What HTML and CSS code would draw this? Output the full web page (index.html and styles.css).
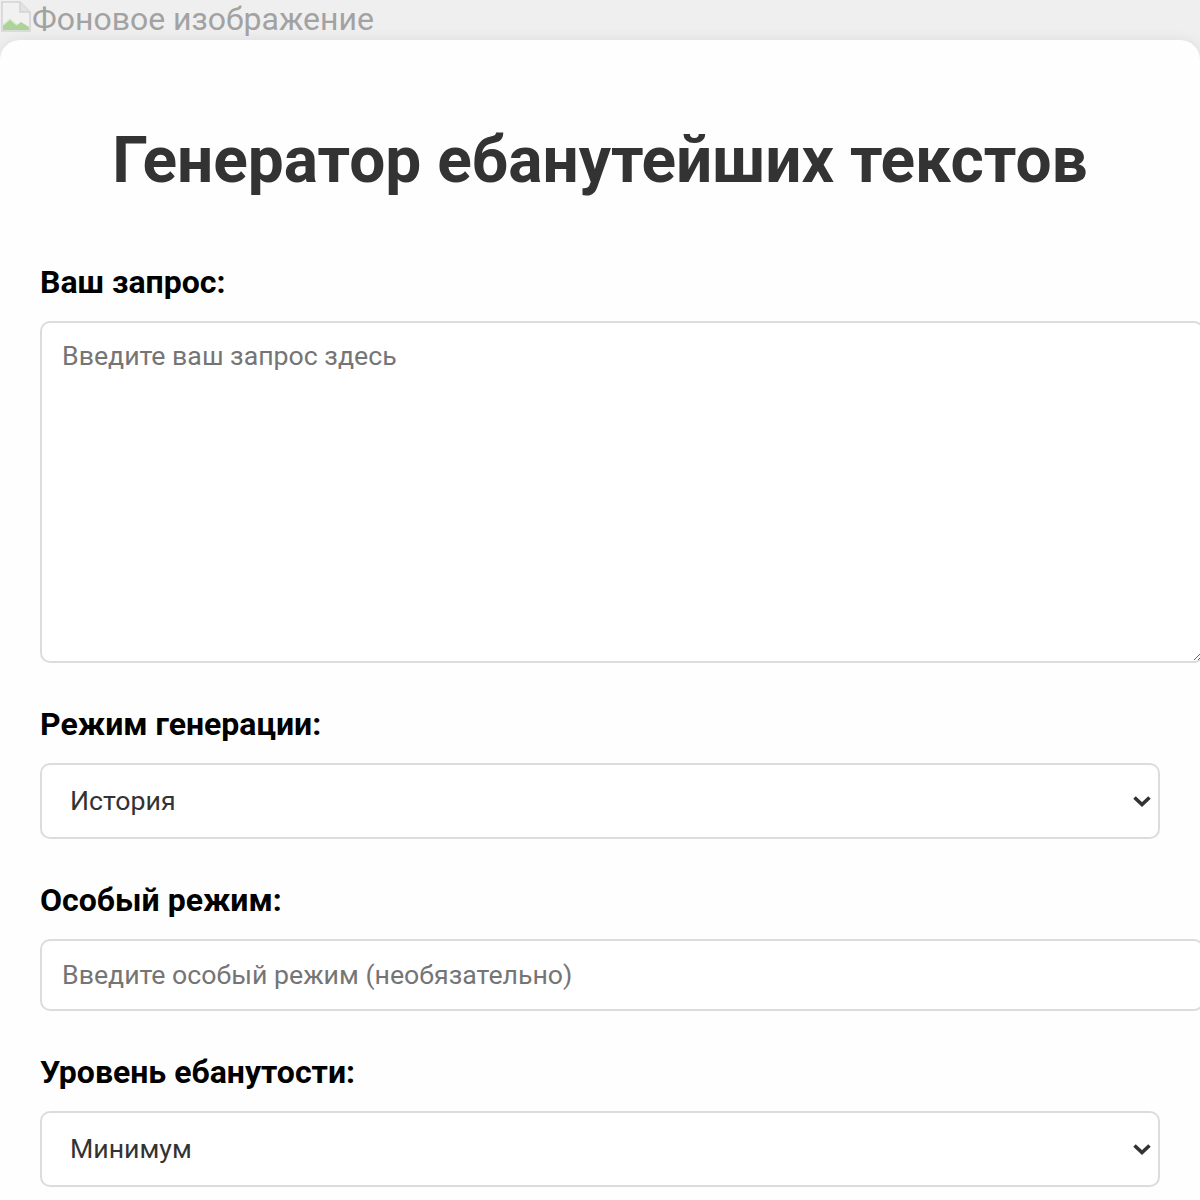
FILE: index.html
```html
<!DOCTYPE html>
<html lang="ru">
<head>
<meta charset="utf-8">
<title>Генератор ебанутейших текстов</title>
<link rel="stylesheet" href="styles.css">
</head>
<body>
<div class="bg">
  <svg class="broken" width="32" height="32" viewBox="0 0 32 32" aria-hidden="true">
    <path d="M2 2 H20 L30 12 V31 H2 Z" fill="#f2f2f2" stroke="#cfcfcf" stroke-width="1.5"/>
    <path d="M20 2 V12 H30" fill="#e2e2e2" stroke="#cfcfcf" stroke-width="1.5"/>
    <path d="M3 30 V25 L10 19 L17 25 L21 22 L29 27 V30 Z" fill="#a3cf8b"/>
    <path d="M3 25 L10 19 L17 25" fill="none" stroke="#d8ecd0" stroke-width="1.4"/>
  </svg>
  <span class="alt">Фоновое изображение</span>
</div>
<main class="card">
  <h1 class="title">Генератор ебанутейших текстов</h1>
  <div class="group">
    <label class="label" for="q">Ваш запрос:</label>
    <textarea id="q" class="field area" placeholder="Введите ваш запрос здесь"></textarea>
  </div>
  <div class="group">
    <label class="label" for="mode">Режим генерации:</label>
    <div class="select-wrap">
      <select id="mode" class="select">
        <option>История</option>
      </select>
      <svg class="chev" width="20" height="14" viewBox="0 0 20 14" aria-hidden="true"><path d="M2.5 3.5 L10 10.5 L17.5 3.5" fill="none" stroke="#333" stroke-width="3.6"/></svg>
    </div>
  </div>
  <div class="group">
    <label class="label" for="special">Особый режим:</label>
    <input id="special" class="field input" type="text" placeholder="Введите особый режим (необязательно)">
  </div>
  <div class="group">
    <label class="label" for="level">Уровень ебанутости:</label>
    <div class="select-wrap">
      <select id="level" class="select">
        <option>Минимум</option>
      </select>
      <svg class="chev" width="20" height="14" viewBox="0 0 20 14" aria-hidden="true"><path d="M2.5 3.5 L10 10.5 L17.5 3.5" fill="none" stroke="#333" stroke-width="3.6"/></svg>
    </div>
  </div>
</main>
</body>
</html>
```
FILE: styles.css
```css
html, body {
  margin: 0;
  padding: 0;
}
body {
  background: #efefef;
  font-family: Roboto, "Noto Sans", Arial, sans-serif;
  overflow: hidden;
}
.bg {
  height: 40px;
  display: flex;
  align-items: flex-start;
  overflow: hidden;
}
.broken {
  flex: none;
  opacity: 0.85;
}
.alt {
  font-size: 32px;
  line-height: 38px;
  color: #a2a2a2;
  white-space: nowrap;
}
.card {
  background: #fefefe;
  border-radius: 20px;
  box-shadow: 0 0 14px rgba(0, 0, 0, 0.08);
  padding: 40px;
  min-height: 1200px;
}
.title {
  font-size: 64px;
  font-weight: 700;
  color: #333;
  text-align: center;
  margin: 43px 0 66px;
  line-height: 75px;
  white-space: nowrap;
}
.group {
  margin-bottom: 43px;
}
.label {
  display: block;
  font-size: 32px;
  font-weight: 700;
  color: #000;
  line-height: 37px;
  margin-bottom: 20px;
}
.field {
  display: block;
  width: 100%;
  box-sizing: content-box;
  border: 2px solid #dcdcdc;
  border-radius: 10px;
  padding: 18px 20px;
  font-family: Roboto, "Noto Sans", Arial, sans-serif;
  font-size: 26.7px;
  color: #333;
  background: #fff;
  outline: none;
}
.field::placeholder {
  color: #757575;
}
.area {
  height: 302px;
  line-height: 30px;
  resize: vertical;
}
.input {
  height: 32px;
  line-height: 32px;
}
.select-wrap {
  position: relative;
}
.select {
  display: block;
  width: 100%;
  height: 76px;
  box-sizing: border-box;
  border: 2px solid #dcdcdc;
  border-radius: 10px;
  padding: 0 60px 0 28px;
  font-family: Roboto, "Noto Sans", Arial, sans-serif;
  font-size: 26.7px;
  color: #333;
  background: #fff;
  -webkit-appearance: none;
  appearance: none;
  outline: none;
}
.chev {
  position: absolute;
  right: 8px;
  top: 31px;
  pointer-events: none;
}
```
